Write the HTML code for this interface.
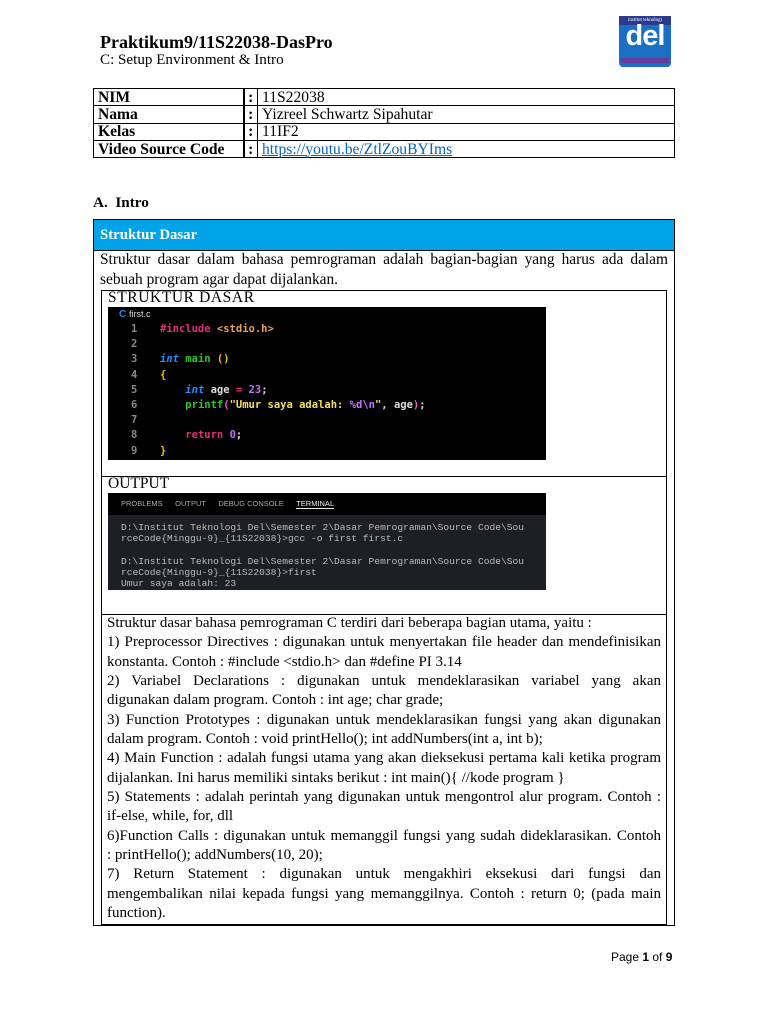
<!DOCTYPE html>
<html><head><meta charset="utf-8"><style>
*{margin:0;padding:0;box-sizing:border-box}
body{width:768px;height:1024px;background:#fff;position:relative;font-family:"Liberation Serif",serif;color:#000;overflow:hidden}
.a{position:absolute}
.t{font-size:15.2px;white-space:nowrap}
table.info{position:absolute;left:93px;top:88px;width:582px;border-collapse:collapse;font-size:15.6px}
table.info td{border:1px solid #000;height:17.3px;padding:0 4px;line-height:15px}
table.info td.l{font-weight:bold;width:150px;border-right:2px solid #000}
table.info td.c{width:14px;font-weight:bold;text-align:center;padding:0}
.code{font-family:"DejaVu Sans Mono","Liberation Mono",monospace;font-size:10.5px;font-weight:bold;white-space:pre;line-height:15.2px}
.term{font-family:"Liberation Mono",monospace;font-size:9.6px;color:#bbb;white-space:pre;line-height:11.3px}
.body{position:absolute;left:107px;top:614px;width:554px;font-size:15px;line-height:19.35px}
.body div{height:19.35px;overflow:visible}
.body .j{text-align:justify;text-align-last:justify}
</style></head><body>
<div class="a" style="left:100px;top:32px;font-size:18px;font-weight:bold">Praktikum9/11S22038-DasPro</div>
<div class="a" style="left:100px;top:52px;font-size:15.1px">C: Setup Environment &amp; Intro</div>
<div class="a" style="left:619px;top:16px;width:52px;height:51px;background:#1a6fc4;border-radius:0 0 4px 4px"></div>
<div class="a" style="left:619px;top:16px;width:52px;height:9px;background:#2a3a8c;color:#fff;font-size:5px;text-align:center;line-height:9px">institut teknologi</div>
<div class="a" style="left:619px;top:20px;width:52px;text-align:center;color:#fff;font-family:'Liberation Sans',sans-serif;font-weight:bold;font-size:29px;letter-spacing:-1px">del</div>
<div class="a" style="left:621px;top:58px;width:48px;height:5px;background:#6a3a9a"></div>

<table class="info">
<tr><td class="l">NIM</td><td class="c">:</td><td>11S22038</td></tr>
<tr><td class="l">Nama</td><td class="c">:</td><td>Yizreel Schwartz Sipahutar</td></tr>
<tr><td class="l">Kelas</td><td class="c">:</td><td>11IF2</td></tr>
<tr><td class="l">Video Source Code</td><td class="c">:</td><td><span style="color:#0563c1;text-decoration:underline">https://youtu.be/ZtlZouBYIms</span></td></tr>
</table>

<div class="a t" style="left:93px;top:194px;font-weight:bold">A.&nbsp;&nbsp;Intro</div>

<div class="a" style="left:93px;top:219px;width:582px;height:707px;border:1px solid #000"></div>
<div class="a" style="left:94px;top:220px;width:580px;height:31px;background:#00a2e8;border-bottom:1px solid #000"></div>
<div class="a" style="left:100px;top:227px;color:#fff;font-weight:bold;font-size:14.8px;white-space:nowrap">Struktur Dasar</div>
<div class="a" style="left:100px;top:250px;width:568px;font-size:15.4px;line-height:19.5px;text-align:justify">Struktur dasar dalam bahasa pemrograman adalah bagian-bagian yang harus ada dalam sebuah program agar dapat dijalankan.</div>

<div class="a" style="left:101px;top:290px;width:566px;height:635px;border:1px solid #000;border-bottom:none"></div>
<div class="a" style="left:101px;top:476px;width:566px;height:1px;background:#000"></div>
<div class="a" style="left:101px;top:614px;width:566px;height:1px;background:#000"></div>
<div class="a" style="left:108px;top:289px;font-size:15.5px;letter-spacing:0.6px;white-space:nowrap">STRUKTUR DASAR</div>
<div class="a" style="left:108px;top:307px;width:438px;height:153px;background:#000"></div>
<div class="a" style="left:119px;top:309px;color:#1e90e0;font-family:'Liberation Sans',sans-serif;font-weight:bold;font-size:10px">C <span style="color:#ddd;font-weight:normal;font-size:9px">first.c</span></div>
<div class="a code" style="left:131px;top:322px;color:#888">1
2
3
4
5
6
7
8
9</div>
<div class="a code" style="left:160px;top:322px;color:#ddd"><span style="color:#e0307a">#include</span> <span style="color:#e8a060">&lt;stdio.h&gt;</span>

<i style="color:#1e90ff">int</i> <span style="color:#28c828">main</span> <span style="color:#f0c000">()</span>
<span style="color:#f0c000">{</span>
    <i style="color:#1e90ff">int</i> age <span style="color:#e0307a">=</span> <span style="color:#c070ff">23</span>;
    <span style="color:#28c828">printf</span><span style="color:#e060c0">(</span><span style="color:#f0e060">"Umur saya adalah: <span style="color:#c070ff">%d\n</span>"</span>, age<span style="color:#e060c0">)</span>;

    <span style="color:#e0307a">return</span> <span style="color:#c070ff">0</span>;
<span style="color:#f0c000">}</span></div>

<div class="a" style="left:108px;top:475px;font-size:15.5px;white-space:nowrap">OUTPUT</div>
<div class="a" style="left:108px;top:493px;width:438px;height:97px;background:#1e1f24"></div>
<div class="a" style="left:108px;top:493px;width:438px;height:22px;background:#000"></div>
<div class="a" style="left:121px;top:499px;font-family:'Liberation Sans',sans-serif;font-size:7.5px;color:#aaa;white-space:pre">PROBLEMS      OUTPUT      DEBUG CONSOLE      <span style="color:#eee;border-bottom:1px solid #eee">TERMINAL</span></div>
<div class="a term" style="left:121px;top:522px">D:\Institut Teknologi Del\Semester 2\Dasar Pemrograman\Source Code\Sou
rceCode{Minggu-9}_{11S22038}&gt;gcc -o first first.c

D:\Institut Teknologi Del\Semester 2\Dasar Pemrograman\Source Code\Sou
rceCode{Minggu-9}_{11S22038}&gt;first
Umur saya adalah: 23</div>

<div class="body">
<div>Struktur dasar bahasa pemrograman C terdiri dari beberapa bagian utama, yaitu :</div>
<div class="j">1) Preprocessor Directives : digunakan untuk menyertakan file header dan mendefinisikan</div>
<div>konstanta. Contoh : #include &lt;stdio.h&gt; dan #define PI 3.14</div>
<div class="j">2) Variabel Declarations : digunakan untuk mendeklarasikan variabel yang akan</div>
<div>digunakan dalam program. Contoh : int age; char grade;</div>
<div class="j">3) Function Prototypes : digunakan untuk mendeklarasikan fungsi yang akan digunakan</div>
<div>dalam program. Contoh : void printHello(); int addNumbers(int a, int b);</div>
<div class="j">4) Main Function : adalah fungsi utama yang akan dieksekusi pertama kali ketika program</div>
<div>dijalankan. Ini harus memiliki sintaks berikut : int main(){ //kode program }</div>
<div class="j">5) Statements : adalah perintah yang digunakan untuk mengontrol alur program. Contoh :</div>
<div>if-else, while, for, dll</div>
<div class="j">6)Function Calls : digunakan untuk memanggil fungsi yang sudah dideklarasikan. Contoh</div>
<div>: printHello(); addNumbers(10, 20);</div>
<div class="j">7) Return Statement : digunakan untuk mengakhiri eksekusi dari fungsi dan</div>
<div class="j">mengembalikan nilai kepada fungsi yang memanggilnya. Contoh : return 0; (pada main</div>
<div>function).</div>
</div>
<div class="a" style="left:101px;top:924px;width:566px;height:1px;background:#000"></div>

<div class="a" style="left:611px;top:950px;font-family:'Liberation Sans',sans-serif;font-size:12px">Page <b>1</b> of <b>9</b></div>
</body></html>
